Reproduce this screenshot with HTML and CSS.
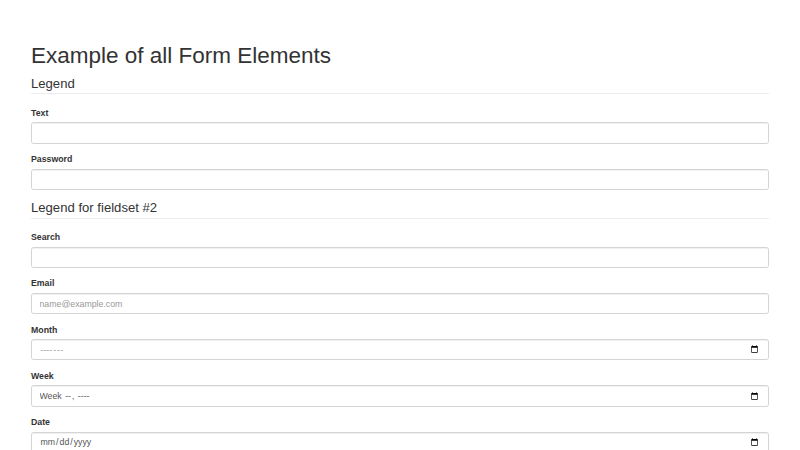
FILE: index.html
```html
<!DOCTYPE html>
<html lang="en">
<head>
<meta charset="utf-8">
<title>Example of all Form Elements</title>
<link rel="stylesheet" href="styles.css">
</head>
<body>
<div class="container">
  <h1 class="title">Example of all Form Elements</h1>
  <form class="form">
    <fieldset class="fieldset">
      <legend class="legend">Legend</legend>
      <div class="form-group">
        <label class="label" for="f-text">Text</label>
        <input class="form-control" id="f-text" type="text">
      </div>
      <div class="form-group">
        <label class="label" for="f-pass">Password</label>
        <input class="form-control" id="f-pass" type="password">
      </div>
    </fieldset>
    <fieldset class="fieldset">
      <legend class="legend">Legend for fieldset #2</legend>
      <div class="form-group">
        <label class="label" for="f-search">Search</label>
        <input class="form-control" id="f-search" type="search">
      </div>
      <div class="form-group">
        <label class="label" for="f-email">Email</label>
        <input class="form-control" id="f-email" type="email" placeholder="name@example.com">
      </div>
      <div class="form-group">
        <label class="label" for="f-month">Month</label>
        <input class="form-control form-month" id="f-month" type="month">
      </div>
      <div class="form-group">
        <label class="label" for="f-week">Week</label>
        <input class="form-control" id="f-week" type="week">
      </div>
      <div class="form-group">
        <label class="label" for="f-date">Date</label>
        <input class="form-control" id="f-date" type="date">
      </div>
    </fieldset>
  </form>
</div>
</body>
</html>
```
FILE: styles.css
```css
html, body {
  margin: 0;
  background: #fff;
}
body {
  padding-top: 31.25px;
  font-family: "Liberation Sans", Helvetica, Arial, sans-serif;
  font-size: 8.75px;
  line-height: 1.428571;
  color: #333;
}
.container {
  padding: 0 31px;
}
.title {
  margin: 12.5px 0 6.25px;
  font-size: 22.5px;
  font-weight: 500;
  line-height: 1.1;
  color: #333;
}
.form {
  margin: 0;
}
.fieldset {
  margin: 0;
  padding: 0;
  border: 0;
  min-width: 0;
}
.legend {
  display: block;
  width: 100%;
  padding: 0;
  margin-bottom: 12.5px;
  font-size: 13.125px;
  line-height: 18.75px;
  color: #333;
  border-bottom: 1px solid #ececec;
  box-sizing: border-box;
  height: 19.4px;
}
.form-group {
  margin-bottom: 9.375px;
}
.label {
  display: inline-block;
  max-width: 100%;
  margin-bottom: 3.125px;
  font-weight: bold;
  line-height: 12.5px;
}
.form-control {
  display: block;
  width: 100%;
  height: 21.25px;
  padding: 2.5px 7.5px;
  box-sizing: border-box;
  font-family: "Liberation Sans", Helvetica, Arial, sans-serif;
  font-size: 8.75px;
  line-height: 12.5px;
  color: #555;
  background: #fff;
  border: 1px solid #d4d4d4;
  border-radius: 2.5px;
  box-shadow: inset 0 0.625px 0.625px rgba(0, 0, 0, 0.075);
  margin: 0;
}
.form-control::placeholder {
  color: #999;
}
.form-control::-webkit-datetime-edit-text {
  padding: 0;
}
.form-month {
  color: #999;
}
.form-month::-webkit-datetime-edit-month-field {
  display: inline-block;
  min-width: 30px;
  letter-spacing: 0.5px;
}
```
